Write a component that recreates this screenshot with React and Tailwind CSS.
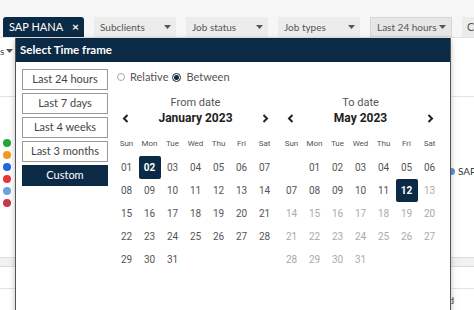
import React from "react";

const navy = "bg-[#0b2a45]";

const jan = [
  ["01", "02", "03", "04", "05", "06", "07"],
  ["08", "09", "10", "11", "12", "13", "14"],
  ["15", "16", "17", "18", "19", "20", "21"],
  ["22", "23", "24", "25", "26", "27", "28"],
  ["29", "30", "31", "", "", "", ""],
];

const may = [
  ["", "01", "02", "03", "04", "05", "06"],
  ["07", "08", "09", "10", "11", "12", "13"],
  ["14", "15", "16", "17", "18", "19", "20"],
  ["21", "22", "23", "24", "25", "26", "27"],
  ["28", "29", "30", "31", "", "", ""],
];

const dayNames = ["Sun", "Mon", "Tue", "Wed", "Thu", "Fri", "Sat"];

function Caret() {
  return (
    <svg width="7" height="4" viewBox="0 0 7 4" className="shrink-0">
      <path d="M0 0h7L3.5 4z" fill="#555" />
    </svg>
  );
}

function Chevron({ dir }) {
  return (
    <svg width="7" height="9" viewBox="0 0 7 9">
      {dir === "left" ? (
        <path d="M5.5 1L2 4.5l3.5 3.5" stroke="#222" strokeWidth="2" fill="none" />
      ) : (
        <path d="M1.5 1L5 4.5 1.5 8" stroke="#222" strokeWidth="2" fill="none" />
      )}
    </svg>
  );
}

function Dropdown({ label, active }) {
  return (
    <div
      className={`w-[82px] h-[20px] shrink-0 flex items-center justify-between pl-[6px] pr-[5px] text-[10px] text-[#555] whitespace-nowrap ${
        active ? "bg-[#e6e6e6] border border-[#d6d6d6]" : "bg-[#ececec]"
      }`}
    >
      <span>{label}</span>
      <Caret />
    </div>
  );
}

function Calendar({ title, month, rows, selected, disabledAfter }) {
  return (
    <div className="w-[161px] flex flex-col">
      <div className="h-[14px] mt-[11px] text-center text-[11px] text-[#555]">{title}</div>
      <div className="h-[18px] flex items-center justify-between px-[7px]">
        <Chevron dir="left" />
        <span className="text-[12px] font-bold text-[#222]">{month}</span>
        <Chevron dir="right" />
      </div>
      <div className="grid grid-cols-7 mt-[10px] h-[14px] items-center">
        {dayNames.map((d) => (
          <div key={d} className="text-center text-[8px] text-[#555]">
            {d}
          </div>
        ))}
      </div>
      <div className="mt-[5px] flex flex-col">
        {rows.map((r, i) => (
          <div key={i} className="grid grid-cols-7 h-[23px]">
            {r.map((d, j) => {
              const isSel = d === selected;
              const faded = disabledAfter && d && Number(d) > disabledAfter;
              return (
                <div key={j} className="flex items-center justify-center">
                  {d && (
                    <div
                      className={`w-[22px] h-[23px] flex items-center justify-center text-[10px] rounded-[2px] ${
                        isSel
                          ? `${navy} text-white font-bold`
                          : faded
                          ? "text-[#aaa]"
                          : "text-[#555]"
                      }`}
                    >
                      {d}
                    </div>
                  )}
                </div>
              );
            })}
          </div>
        ))}
      </div>
    </div>
  );
}

export default function App() {
  const presets = ["Last 24 hours", "Last 7 days", "Last 4 weeks", "Last 3 months"];
  const dots = ["bg-[#22a83a]", "bg-[#f39a1e]", "bg-[#1f66e0]", "bg-[#e8353a]", "bg-[#6aa3dd]", "bg-[#c8384a]"];

  return (
    <div
      className="relative w-[474px] h-[310px] overflow-hidden bg-white"
      style={{ fontFamily: "Lato, 'Open Sans', sans-serif" }}
    >
      {/* page behind */}
      <div className="bg-[#f6f6f6] pt-[17px] pl-[3px] h-[38px] flex gap-[10px] border-b border-[#e2e2e2] overflow-hidden">
        <div className={`w-[81px] h-[20px] shrink-0 ${navy} rounded-t-[3px] flex items-center justify-between pl-[6px] pr-[5px] text-white text-[11px]`}>
          <span>SAP HANA</span>
          <span className="text-[12px] font-bold leading-none">×</span>
        </div>
        <Dropdown label="Subclients" />
        <Dropdown label="Job status" />
        <Dropdown label="Job types" />
        <Dropdown label="Last 24 hours" active />
        <div className="w-[30px] h-[20px] shrink-0 bg-[#ececec] pl-[5px] text-[11px] text-[#555] flex items-center">C</div>
      </div>
      <div className="flex justify-between h-[59px] border-b border-[#e4e4e4]">
        <div className="flex items-start pt-[6px] gap-[2px] text-[10px] text-[#444]">
          <span>s</span>
          <span className="mt-[5px]"><Caret /></span>
        </div>
      </div>
      <div className="flex justify-between">
        <div className="flex flex-col gap-[4px] pl-[3px] pt-[42px]">
          {dots.map((c) => (
            <span key={c} className={`w-[8px] h-[8px] rounded-full ${c}`} />
          ))}
        </div>
        <div className="flex items-center gap-[3px] pt-[67px] text-[10px] text-[#333] h-[82px]">
          <span className="w-[7px] h-[7px] rounded-full bg-[#5a92d6]" />
          <span className="w-[16px]">SAP</span>
        </div>
      </div>
      <div className="mt-[50px] h-[10px] bg-[#f1f1f1] border-y border-[#dcdcdc]" />
      <div className="h-[22px] border-b border-[#e4e4e4]" />
      <div className="flex justify-between px-[20px] text-[10px] text-[#444] pt-[4px]">
        <span>Si</span>
        <span>ailed</span>
      </div>

      {/* popup */}
      <div className="absolute left-[15px] top-[38px] w-[436px] h-[280px] bg-white border-x border-[#555] shadow-[0_2px_6px_rgba(0,0,0,0.25)]">
        <div className={`${navy} h-[24px] flex items-center pl-[4px] text-white text-[11.5px] font-bold`}>
          Select Time frame
        </div>
        <div className="flex pl-[6px] pt-[7px]">
          <div className="w-[86px] flex flex-col gap-[3px]">
            {presets.map((p) => (
              <div
                key={p}
                className="h-[21px] border border-[#9a9a9a] flex items-center justify-center text-[11px] text-[#444]"
              >
                {p}
              </div>
            ))}
            <div className={`h-[21px] ${navy} flex items-center justify-center text-[11px] text-white`}>
              Custom
            </div>
          </div>
          <div className="ml-[7px] flex flex-col">
            <div className="flex items-center h-[14px] mt-[1px] text-[11px] text-[#555] pl-[2px]">
              <span className="w-[8px] h-[8px] rounded-full border border-[#aaa]" />
              <span className="ml-[5px]">Relative</span>
              <span className="ml-[4px] w-[9px] h-[9px] rounded-full border-[1.5px] border-[#222] flex items-center justify-center">
                <span className="w-[5px] h-[5px] rounded-full bg-[#0b2a45]" />
              </span>
              <span className="ml-[5px]">Between</span>
            </div>
            <div className="flex gap-[4px]" style={{ fontFamily: "Roboto, 'Open Sans', sans-serif" }}>
              <Calendar title="From date" month="January 2023" rows={jan} selected="02" />
              <Calendar title="To date" month="May 2023" rows={may} selected="12" disabledAfter={12} />
            </div>
          </div>
        </div>
      </div>
    </div>
  );
}
